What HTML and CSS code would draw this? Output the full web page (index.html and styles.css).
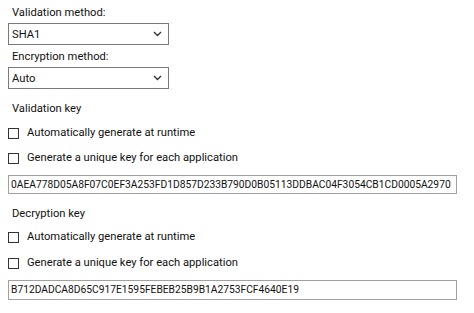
FILE: index.html
```html
<!DOCTYPE html>
<html>
<head>
<meta charset="utf-8">
<link rel="stylesheet" href="styles.css">
</head>
<body>
<div class="panel">
  <div class="label first">Validation method:</div>
  <div class="select">
    <span>SHA1</span>
    <svg class="chev" width="9" height="6" viewBox="0 0 9 6"><path d="M1 1 L4.5 4.5 L8 1" fill="none" stroke="#333" stroke-width="1.4"/></svg>
  </div>
  <div class="label">Encryption method:</div>
  <div class="select">
    <span>Auto</span>
    <svg class="chev" width="9" height="6" viewBox="0 0 9 6"><path d="M1 1 L4.5 4.5 L8 1" fill="none" stroke="#333" stroke-width="1.4"/></svg>
  </div>

  <div class="section s1">Validation key</div>
  <div class="check c1"><span class="box"></span>Automatically generate at runtime</div>
  <div class="check c2"><span class="box"></span>Generate a unique key for each application</div>
  <div class="textbox t1">0AEA778D05A8F07C0EF3A253FD1D857D233B790D0B05113DDBAC04F3054CB1CD0005A2970</div>

  <div class="section s2">Decryption key</div>
  <div class="check c3"><span class="box"></span>Automatically generate at runtime</div>
  <div class="check c4"><span class="box"></span>Generate a unique key for each application</div>
  <div class="textbox t2">B712DADCA8D65C917E1595FEBEB25B9B1A2753FCF4640E19</div>
</div>
</body>
</html>
```
FILE: styles.css
```css
html, body {
  margin: 0;
  padding: 0;
  background: #ffffff;
}
body {
  font-family: Roboto, "Noto Sans", sans-serif;
  font-size: 11.2px;
  color: #111111;
}
.panel {
  display: flex;
  flex-direction: column;
  align-items: flex-start;
  padding: 5px 0 0 8px;
}
.label {
  height: 16px;
  line-height: 16px;
  padding-left: 4px;
  margin-top: 4px;
}
.label.first {
  margin-top: 0;
}
.select {
  box-sizing: border-box;
  width: 161px;
  height: 22px;
  margin-top: 2px;
  border: 1px solid #7a7a7a;
  display: flex;
  align-items: center;
  justify-content: space-between;
  padding: 0 6px 0 3px;
}
.section {
  height: 16px;
  line-height: 16px;
  padding-left: 4px;
}
.section.s1 { margin-top: 12px; }
.section.s2 { margin-top: 12px; }
.check {
  display: flex;
  align-items: center;
  height: 16px;
  line-height: 16px;
}
.check.c1 { margin-top: 8px; }
.check.c2 { margin-top: 9px; }
.check.c3 { margin-top: 7px; }
.check.c4 { margin-top: 10px; }
.box {
  box-sizing: border-box;
  width: 11px;
  height: 11px;
  border: 1px solid #333333;
  margin-right: 8px;
}
.textbox {
  box-sizing: border-box;
  width: 449px;
  font-size: 10.25px;
  border: 1px solid #a0a0a0;
  padding-left: 2px;
  white-space: nowrap;
  overflow: hidden;
}
.textbox.t1 {
  height: 19px;
  line-height: 17px;
  margin-top: 9px;
}
.textbox.t2 {
  height: 20px;
  line-height: 18px;
  margin-top: 9px;
}
```
